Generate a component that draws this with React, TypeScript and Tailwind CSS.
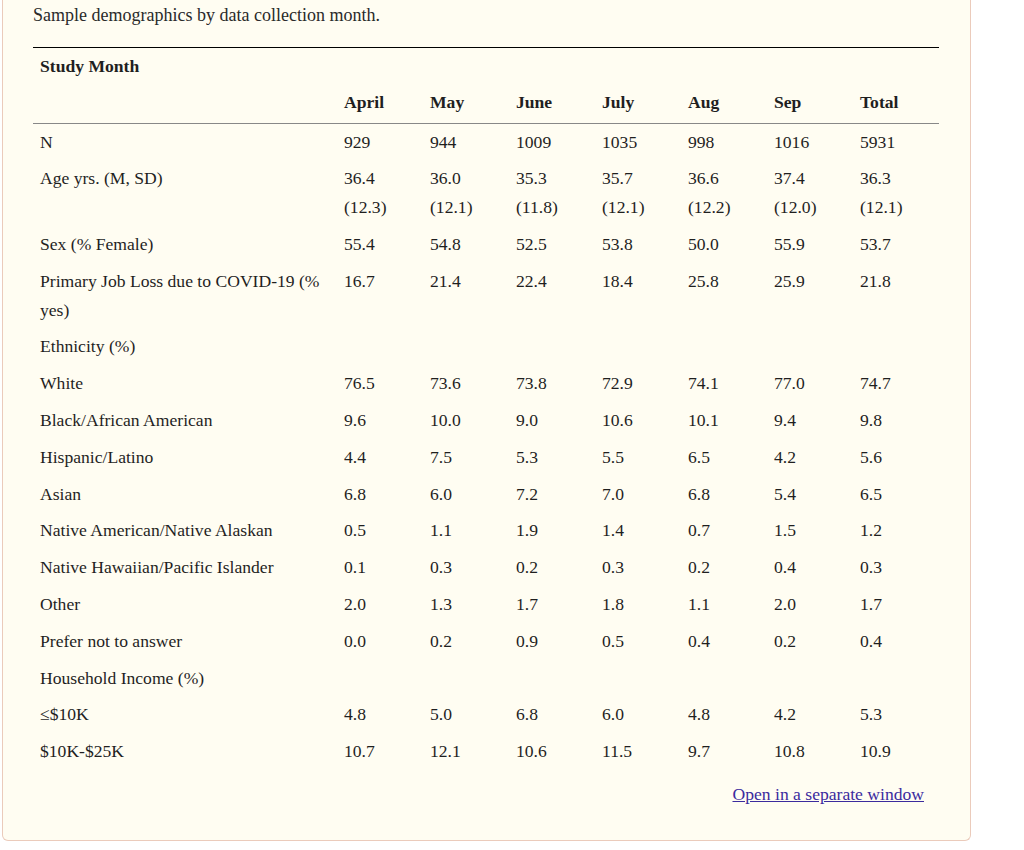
import React from "react";

const months = ["April", "May", "June", "July", "Aug", "Sep", "Total"];

type Row = { label: string; values?: string[][] };

const rows: Row[] = [
  { label: "N", values: [["929"], ["944"], ["1009"], ["1035"], ["998"], ["1016"], ["5931"]] },
  {
    label: "Age yrs. (M, SD)",
    values: [
      ["36.4", "(12.3)"],
      ["36.0", "(12.1)"],
      ["35.3", "(11.8)"],
      ["35.7", "(12.1)"],
      ["36.6", "(12.2)"],
      ["37.4", "(12.0)"],
      ["36.3", "(12.1)"],
    ],
  },
  { label: "Sex (% Female)", values: [["55.4"], ["54.8"], ["52.5"], ["53.8"], ["50.0"], ["55.9"], ["53.7"]] },
  {
    label: "Primary Job Loss due to COVID-19 (% yes)",
    values: [["16.7"], ["21.4"], ["22.4"], ["18.4"], ["25.8"], ["25.9"], ["21.8"]],
  },
  { label: "Ethnicity (%)" },
  { label: "White", values: [["76.5"], ["73.6"], ["73.8"], ["72.9"], ["74.1"], ["77.0"], ["74.7"]] },
  { label: "Black/African American", values: [["9.6"], ["10.0"], ["9.0"], ["10.6"], ["10.1"], ["9.4"], ["9.8"]] },
  { label: "Hispanic/Latino", values: [["4.4"], ["7.5"], ["5.3"], ["5.5"], ["6.5"], ["4.2"], ["5.6"]] },
  { label: "Asian", values: [["6.8"], ["6.0"], ["7.2"], ["7.0"], ["6.8"], ["5.4"], ["6.5"]] },
  { label: "Native American/Native Alaskan", values: [["0.5"], ["1.1"], ["1.9"], ["1.4"], ["0.7"], ["1.5"], ["1.2"]] },
  { label: "Native Hawaiian/Pacific Islander", values: [["0.1"], ["0.3"], ["0.2"], ["0.3"], ["0.2"], ["0.4"], ["0.3"]] },
  { label: "Other", values: [["2.0"], ["1.3"], ["1.7"], ["1.8"], ["1.1"], ["2.0"], ["1.7"]] },
  { label: "Prefer not to answer", values: [["0.0"], ["0.2"], ["0.9"], ["0.5"], ["0.4"], ["0.2"], ["0.4"]] },
  { label: "Household Income (%)" },
  { label: "≤$10K", values: [["4.8"], ["5.0"], ["6.8"], ["6.0"], ["4.8"], ["4.2"], ["5.3"]] },
  { label: "$10K-$25K", values: [["10.7"], ["12.1"], ["10.6"], ["11.5"], ["9.7"], ["10.8"], ["10.9"]] },
];

export default function App() {
  return (
    <div className="bg-white min-h-[850px] pl-[2px] font-['Liberation_Serif',serif] text-[#1f1f1f]">
      <div className="w-[969px] h-[841px] bg-[#fffdf2] border-x border-b border-[#ebcbbb] rounded-b-[6px] pl-[30px] pr-[30px]">
        <p className="text-[18px] leading-[30px] text-[#2a2a2a]">
          Sample demographics by data collection month.
        </p>
        <table className="mt-[17px] w-[906px] table-fixed border-collapse text-[17.6px] leading-[28.8px]">
          <colgroup>
            <col className="w-[304px]" />
            {months.map((m) => (
              <col key={m} className="w-[86px]" />
            ))}
          </colgroup>
          <thead>
            <tr className="border-t border-black">
              <th colSpan={8} className="text-left font-bold px-[7px] py-[4px]">
                Study Month
              </th>
            </tr>
            <tr className="border-b border-[#888]">
              <th className="px-[7px] pt-[3px] pb-[6px]" />
              {months.map((m) => (
                <th key={m} className="text-left font-bold px-[7px] pt-[3px] pb-[6px]">
                  {m}
                </th>
              ))}
            </tr>
          </thead>
          <tbody>
            {rows.map((r) => (
              <tr key={r.label}>
                <td className="align-top px-[7px] py-[4px] pr-[12px]">{r.label}</td>
                {r.values
                  ? r.values.map((v, i) => (
                      <td key={i} className="align-top px-[7px] py-[4px]">
                        {v.map((line, j) => (
                          <div key={j}>{line}</div>
                        ))}
                      </td>
                    ))
                  : months.map((m) => <td key={m} className="px-[7px] py-[4px]" />)}
              </tr>
            ))}
          </tbody>
        </table>
        <div className="mt-[9px] flex justify-end pr-[16px]">
          <a href="#" className="text-[17.6px] leading-[30px] text-[#3b2b9e] underline">
            Open in a separate window
          </a>
        </div>
      </div>
    </div>
  );
}
